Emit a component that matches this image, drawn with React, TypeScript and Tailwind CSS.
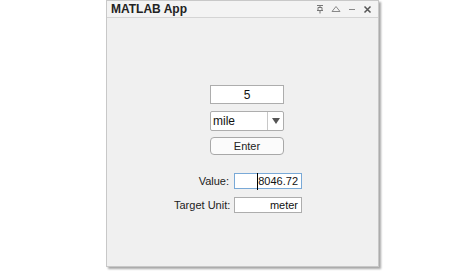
export default function App() {
  return (
    <div className="w-[474px] h-[273px] bg-white relative" style={{ fontFamily: '"Liberation Sans", Arial, sans-serif' }}>
      <div className="absolute left-[106px] top-0 w-[273px] h-[267px] bg-[#f0f0f0] border border-[#c8c8c8] shadow-[2px_2px_2px_rgba(0,0,0,0.35)] flex flex-col">
        <div className="h-[17px] flex items-center justify-between px-[4px] border-b border-[#d4d4d4] bg-[#f3f3f3]">
          <span className="text-[12px] font-bold text-[#222]">MATLAB App</span>
          <div className="flex items-center gap-[7px] text-[#666] pr-[2px]">
            <svg width="8" height="10" viewBox="0 0 8 10" fill="none" stroke="#777" strokeWidth="1">
              <path d="M1 1.5h6M4 1.5v2M2 3.5h4v3h-4zM1 6.5h6M4 6.5v3" />
            </svg>
            <svg width="10" height="8" viewBox="0 0 10 8" fill="none" stroke="#888" strokeWidth="1">
              <path d="M1 6.5h8L5 1.5z" />
            </svg>
            <svg width="8" height="8" viewBox="0 0 8 8" fill="none" stroke="#888" strokeWidth="1">
              <path d="M1 4.5h6" />
            </svg>
            <svg width="9" height="9" viewBox="0 0 9 9" fill="none" stroke="#555" strokeWidth="1.5">
              <path d="M1.5 1.5l6 6M7.5 1.5l-6 6" />
            </svg>
          </div>
        </div>
        <div className="flex-1 flex flex-col items-start pl-[103px] pt-[67px]">
          <div className="w-[74px] h-[19px] bg-white border border-[#adadad] flex items-center justify-center text-[12px] text-[#111]">5</div>
          <div className="mt-[7px] w-[74px] h-[20px] bg-white border border-[#adadad] flex items-stretch rounded-[2px]">
            <span className="flex-1 flex items-center pl-[2px] text-[12px] text-[#111]">mile</span>
            <span className="w-[16px] border-l border-[#c8c8c8] flex items-center justify-center">
              <svg width="8" height="6" viewBox="0 0 8 6"><path d="M0 0h8L4 6z" fill="#555" /></svg>
            </span>
          </div>
          <div className="mt-[6px] w-[74px] h-[18px] bg-[#fbfbfb] border border-[#a8a8a8] rounded-[4px] flex items-center justify-center text-[11px] text-[#222]">Enter</div>
        </div>
        <div className="flex flex-col items-start pl-[67px] pb-[53px] gap-[7px]">
          <div className="flex items-center">
            <span className="w-[60px] text-right text-[11px] text-[#222] pr-[5px]">Value:</span>
            <div className="w-[68px] h-[16px] bg-white border border-[#79a9d7] flex items-center justify-end pr-[3px] text-[11px] text-[#111]">
              <span className="border-l border-black">8046.72</span>
            </div>
          </div>
          <div className="flex items-center">
            <span className="w-[60px] text-right text-[11px] text-[#222] pr-[5px] whitespace-nowrap">Target Unit:</span>
            <div className="w-[68px] h-[16px] bg-white border border-[#adadad] flex items-center justify-end pr-[3px] text-[11px] text-[#111]">meter</div>
          </div>
        </div>
      </div>
    </div>
  );
}
